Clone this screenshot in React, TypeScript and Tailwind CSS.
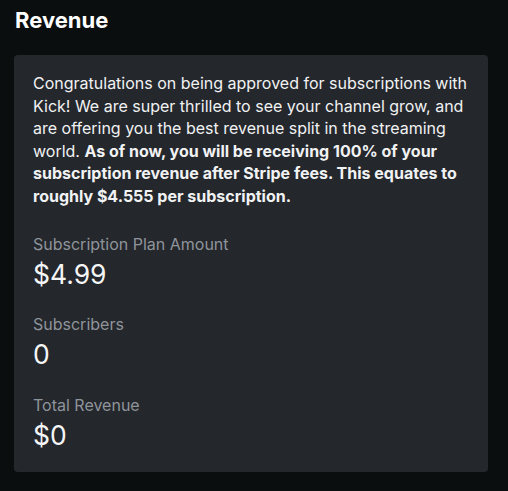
export default function App() {
  const items = [
    { label: "Subscription Plan Amount", value: "$4.99" },
    { label: "Subscribers", value: "0" },
    { label: "Total Revenue", value: "$0" },
  ];
  return (
    <div className="min-h-[491px] w-[508px] bg-[#0b0e0f] pl-[14px] pr-[20px] pt-[5px] pb-[17px] font-['Inter',sans-serif] text-white">
      <h1 className="text-[22px] font-bold leading-[30px] px-[1px]">Revenue</h1>
      <div className="mt-[20px] rounded-[4px] bg-[#24272c] px-[19px] pt-[17px] pb-[21px]">
        <p className="text-[16px] leading-[22.6px] text-[#f1f2f3]">
          Congratulations on being approved for subscriptions with Kick! We are super thrilled to see your channel grow, and are offering you the best revenue split in the streaming world.{" "}
          <span className="font-bold">
            As of now, you will be receiving 100% of your subscription revenue after Stripe fees. This equates to roughly $4.555 per subscription.
          </span>
        </p>
        <div className="mt-[24px] flex flex-col gap-[22.5px]">
          {items.map((it) => (
            <div key={it.label} className="flex flex-col gap-[2px]">
              <div className="text-[16px] leading-[24px] text-[#8f949b]">{it.label}</div>
              <div className="text-[26.5px] leading-[32px] text-[#f4f5f6]">{it.value}</div>
            </div>
          ))}
        </div>
      </div>
    </div>
  );
}
